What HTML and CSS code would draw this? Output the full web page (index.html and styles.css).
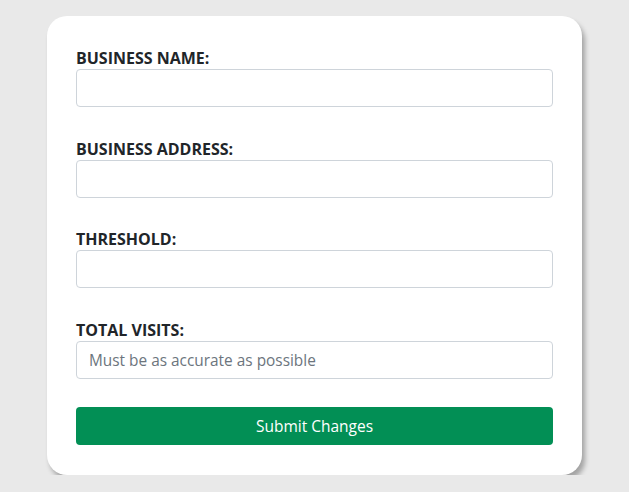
FILE: index.html
```html
<!DOCTYPE html>
<html lang="en">
<head>
<meta charset="utf-8">
<title>Business settings</title>
<link rel="stylesheet" href="styles.css">
</head>
<body>
<main class="page">
  <form class="card">
    <div class="field">
      <label class="label" for="bname">BUSINESS NAME:</label>
      <input class="input" id="bname" type="text">
    </div>
    <div class="field field-tight">
      <label class="label" for="baddr">BUSINESS ADDRESS:</label>
      <input class="input" id="baddr" type="text">
    </div>
    <div class="field">
      <label class="label" for="thr">THRESHOLD:</label>
      <input class="input" id="thr" type="text">
    </div>
    <div class="field field-last">
      <label class="label" for="visits">TOTAL VISITS:</label>
      <input class="input" id="visits" type="text" placeholder="Must be as accurate as possible">
    </div>
    <button class="submit" type="button">Submit Changes</button>
  </form>
</main>
</body>
</html>
```

FILE: styles.css
```css
html, body {
  margin: 0;
  padding: 0;
  background: #e9e9e9;
  font-family: "Open Sans", "Noto Sans", "Liberation Sans", sans-serif;
}
.page {
  padding: 16px 0 0 47px;
}
.card {
  box-sizing: border-box;
  width: 535px;
  height: 459px;
  background: #fff;
  border-radius: 20px;
  box-shadow: 3px 5px 5px rgba(0, 0, 0, 0.3);
  padding: 31px 29px 30px;
  display: flex;
  flex-direction: column;
}
.field {
  display: flex;
  flex-direction: column;
  margin-bottom: 31px;
}
.field-tight {
  margin-bottom: 30px;
}
.field-last {
  margin-bottom: 28px;
}
.label {
  font-weight: 700;
  font-size: 16px;
  line-height: 22px;
  color: #212529;
}
.input {
  box-sizing: border-box;
  height: 38px;
  width: 100%;
  border: 1px solid #ced4da;
  border-radius: 4px;
  padding: 0 12px;
  font-family: inherit;
  font-size: 15.4px;
  color: #495057;
  background: #fff;
}
.input::placeholder {
  color: #6c757d;
}
.submit {
  height: 38px;
  width: 100%;
  border: none;
  border-radius: 4px;
  background: #028f55;
  color: #fff;
  font-family: inherit;
  font-size: 15.5px;
}
```
